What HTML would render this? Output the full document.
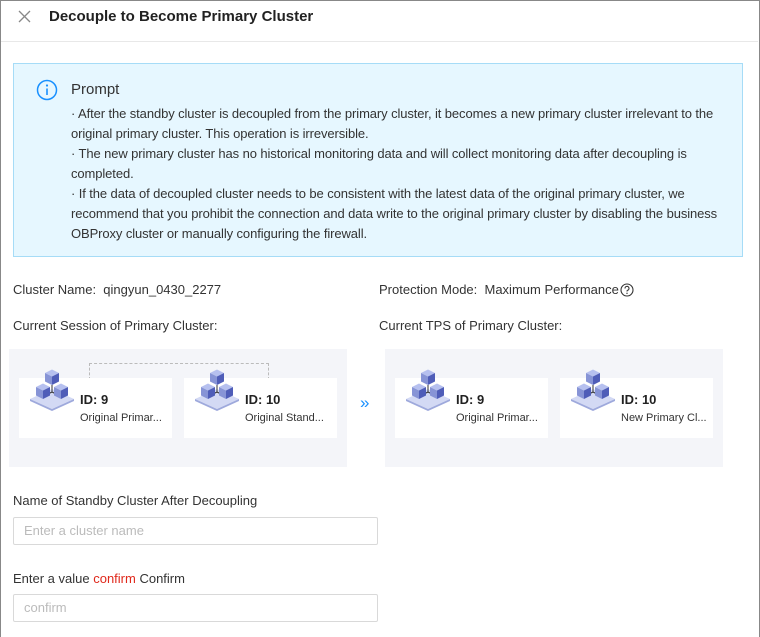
<!DOCTYPE html><html><head><style>
body{margin:0;width:760px;height:636px;overflow:hidden;font-family:"Liberation Sans",sans-serif;color:#333;background:#fff}
.frame{position:absolute;left:0;top:0;width:758px;height:636px;border:1px solid #888;border-bottom:none}
.a{position:absolute}
.t{font-size:13px;color:#333}
.box{position:absolute;left:13px;top:63px;width:728px;height:192px;background:#e6f7ff;border:1px solid #a6dcf7}
.box p{margin:0;font-size:13px;line-height:20px;color:#333;letter-spacing:-0.1px}
.panel{position:absolute;top:349px;width:338px;height:118px;background:#f4f5f9}
.card{position:absolute;top:29px;width:153px;height:60px;background:#fff}
.card .id{position:absolute;left:61px;top:14px;font-size:13px;font-weight:bold;color:#222}
.card .n{position:absolute;left:61px;top:34px;font-size:11px;color:#333}
.card svg{position:absolute;left:10px;top:-9px}
.inp{position:absolute;left:13px;height:28px;border:1px solid #d9d9d9;border-radius:2px;font-size:13px;color:#bbb;line-height:26px;padding-left:10px;box-sizing:border-box;width:365px}
</style></head><body>
<div class="frame"></div>
<svg class="a" style="left:18px;top:10px" width="13" height="13" viewBox="0 0 13 13"><path d="M1 1L12 12M12 1L1 12" stroke="#888" stroke-width="1.3"/></svg>
<div class="a" style="left:49px;top:8px;font-size:15px;font-weight:bold;color:#222">Decouple to Become Primary Cluster</div>
<div class="a" style="left:1px;top:41px;width:757px;height:1px;background:#e8e8e8"></div>
<div class="box">
<svg class="a" style="left:22px;top:15px" width="22" height="22" viewBox="0 0 22 22"><circle cx="11" cy="11" r="9.5" fill="none" stroke="#1890ff" stroke-width="1.5"/><circle cx="11" cy="6.5" r="1.1" fill="#1890ff"/><path d="M11 9.5V16" stroke="#1890ff" stroke-width="1.6"/></svg>
<div class="a" style="left:57px;top:17px;font-size:15px;color:#333">Prompt</div>
<div class="a" style="left:57px;top:40px;width:650px">
<p>· After the standby cluster is decoupled from the primary cluster, it becomes a new primary cluster irrelevant to the original primary cluster. This operation is irreversible.</p>
<p>· The new primary cluster has no historical monitoring data and will collect monitoring data after decoupling is completed.</p>
<p>· If the data of decoupled cluster needs to be consistent with the latest data of the original primary cluster, we recommend that you prohibit the connection and data write to the original primary cluster by disabling the business OBProxy cluster or manually configuring the firewall.</p>
</div></div>
<div class="a t" style="left:13px;top:282px">Cluster Name:&nbsp; qingyun_0430_2277</div>
<div class="a t" style="left:379px;top:282px">Protection Mode:&nbsp; Maximum Performance</div>
<svg class="a" style="left:620px;top:283px" width="14" height="14" viewBox="0 0 14 14"><circle cx="7" cy="7" r="6" fill="none" stroke="#333" stroke-width="1.1"/><path d="M5 5.5a2 2 0 1 1 2.5 1.8c-.5.2-.5.6-.5 1.2" fill="none" stroke="#333" stroke-width="1.1"/><circle cx="7" cy="10.3" r=".7" fill="#333"/></svg>
<div class="a t" style="left:13px;top:318px">Current Session of Primary Cluster:</div>
<div class="a t" style="left:379px;top:318px">Current TPS of Primary Cluster:</div>
<svg width="0" height="0" style="position:absolute"><defs>
<g id="c"><path d="M0 4L7 0.5L14 4L7 7.5Z" fill="#b6c0ef"/><path d="M0 4L7 7.5V16L0 12.5Z" fill="#8794d6"/><path d="M14 4L7 7.5V16L14 12.5Z" fill="#4f5db8"/></g>
<g id="cube">
<path d="M1 30L23 20L45 30L23 40Z" fill="#d3d9f4"/><path d="M1 30L23 40L45 30L45 32L23 42L1 32Z" fill="#9ea9dc"/>
<path d="M23 16V23M23 23L17 26M23 23L29 26" stroke="#333" stroke-width="1"/>
<use href="#c" x="16" y="0"/><use href="#c" x="7" y="14"/><use href="#c" x="25" y="14"/>
</g></defs></svg>
<div class="panel" style="left:9px">
<div class="a" style="left:80px;top:14px;width:178px;height:16px;border:1px dashed #bbb;border-bottom:none"></div>
<div class="card" style="left:10px"><svg width="46" height="44"><use href="#cube"/></svg><div class="id">ID: 9</div><div class="n">Original Primar...</div></div>
<div class="card" style="left:175px"><svg width="46" height="44"><use href="#cube"/></svg><div class="id">ID: 10</div><div class="n">Original Stand...</div></div>
</div>
<div class="a" style="left:360px;top:393px;font-size:17px;color:#1890ff">»</div>
<div class="panel" style="left:385px">
<div class="card" style="left:10px"><svg width="46" height="44"><use href="#cube"/></svg><div class="id">ID: 9</div><div class="n">Original Primar...</div></div>
<div class="card" style="left:175px"><svg width="46" height="44"><use href="#cube"/></svg><div class="id">ID: 10</div><div class="n">New Primary Cl...</div></div>
</div>
<div class="a t" style="left:13px;top:493px">Name of Standby Cluster After Decoupling</div>
<div class="inp" style="top:517px">Enter a cluster name</div>
<div class="a t" style="left:13px;top:571px">Enter a value <span style="color:#e0281b">confirm</span> Confirm</div>
<div class="inp" style="top:594px">confirm</div>
</body></html>
